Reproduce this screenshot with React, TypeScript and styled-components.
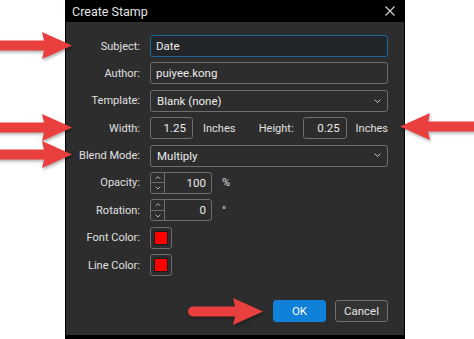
import React from 'react';
import styled, { createGlobalStyle } from 'styled-components';

const GlobalStyle = createGlobalStyle`
  html, body {
    margin: 0;
    padding: 0;
    background: #ffffff;
    font-family: Roboto, "Noto Sans", "Liberation Sans", sans-serif;
  }
`;

const Page = styled.div`
  position: relative;
  width: 474px;
  height: 339px;
  overflow: hidden;
  padding-left: 65px;
  box-sizing: border-box;
`;

const Dialog = styled.div`
  width: 340px;
  height: 339px;
  box-sizing: border-box;
  background: #2d2d2d;
  border: 1px solid #000;
  border-top: none;
  border-bottom: 4px solid #000;
  display: flex;
  flex-direction: column;
`;

const TitleBar = styled.div`
  height: 22px;
  background: #000;
  display: flex;
  align-items: center;
  justify-content: space-between;
  padding: 0 9px 0 6px;
  color: #e4e4e4;
  font-size: 12.5px;
`;

const CloseButton = styled.div`
  width: 10px;
  height: 10px;
  display: flex;
`;

const Body = styled.div`
  flex: 1;
  display: flex;
  flex-direction: column;
  padding: 13px 16px 13px 0;
`;

const Form = styled.div`
  display: grid;
  grid-template-columns: 74px minmax(0, 1fr);
  column-gap: 10px;
  row-gap: 5.4px;
  grid-auto-rows: 22px;
`;

const Label = styled.div`
  color: #e0e0e0;
  font-size: 11px;
  white-space: nowrap;
  display: flex;
  align-items: center;
  justify-content: flex-end;
`;

const Field = styled.div<{ $focused?: boolean; $width?: number; $align?: string }>`
  box-sizing: border-box;
  flex-shrink: 0;
  height: 22px;
  width: ${p => (p.$width ? `${p.$width}px` : '100%')};
  border: 1px solid ${p => (p.$focused ? '#1b6798' : '#6e6e6e')};
  background: ${p => (p.$focused ? '#22262a' : '#2d2d2d')};
  border-radius: 3px;
  color: #ececec;
  font-size: 11.5px;
  display: flex;
  align-items: center;
  justify-content: ${p => p.$align || 'flex-start'};
  padding: 0 6px 0 5px;
`;

const Select = styled(Field)`
  justify-content: space-between;
  padding: 0 6px 0 6px;
`;

const Inline = styled.div`
  display: flex;
  align-items: center;
`;

const Unit = styled.span<{ $gap?: number; $push?: boolean }>`
  color: #e0e0e0;
  font-size: 11px;
  white-space: nowrap;
  margin-left: ${p => (p.$push ? 'auto' : `${p.$gap ?? 10}px`)};
`;

const SpinBox = styled.div`
  box-sizing: border-box;
  width: 62px;
  height: 22px;
  border: 1px solid #6e6e6e;
  border-radius: 3px;
  display: flex;
  overflow: hidden;
`;

const SpinArrows = styled.div`
  width: 13px;
  border-right: 1px solid #6e6e6e;
  display: flex;
  flex-direction: column;
`;

const SpinCell = styled.div<{ $top?: boolean }>`
  flex: 1;
  display: flex;
  align-items: center;
  justify-content: center;
  border-bottom: ${p => (p.$top ? '1px solid #6e6e6e' : 'none')};
`;

const SpinValue = styled.div`
  flex: 1;
  color: #ececec;
  font-size: 11.5px;
  display: flex;
  align-items: center;
  justify-content: flex-end;
  padding-right: 5px;
`;

const Swatch = styled.div`
  box-sizing: border-box;
  width: 22px;
  height: 22px;
  border: 1px solid #6e6e6e;
  border-radius: 3px;
  display: flex;
  align-items: center;
  justify-content: center;
`;

const SwatchFill = styled.div<{ $color: string }>`
  width: 12px;
  height: 12px;
  background: ${p => p.$color};
  outline: 1px solid #1a1a1a;
`;

const Footer = styled.div`
  margin-top: auto;
  display: flex;
  justify-content: flex-end;
  gap: 9px;
`;

const Button = styled.div<{ $primary?: boolean }>`
  box-sizing: border-box;
  width: 53px;
  height: 22px;
  border-radius: 3px;
  font-size: 11.5px;
  display: flex;
  align-items: center;
  justify-content: center;
  color: ${p => (p.$primary ? '#ffffff' : '#e6e6e6')};
  background: ${p => (p.$primary ? '#1080d8' : '#333333')};
  border: 1px solid ${p => (p.$primary ? '#1080d8' : '#707070')};
`;

const ArrowWrap = styled.svg<{ $left: number; $top: number }>`
  position: absolute;
  left: ${p => p.$left}px;
  top: ${p => p.$top}px;
  overflow: visible;
  filter: drop-shadow(1px 2px 1.5px rgba(0, 0, 0, 0.3));
`;

const Chevron = ({ up = false, size = 7 }: { up?: boolean; size?: number }) => (
  <svg width={size} height={size * 0.6} viewBox="0 0 10 6">
    <path
      d={up ? 'M1 5 L5 1 L9 5' : 'M1 1 L5 5 L9 1'}
      fill="none"
      stroke="#cfcfcf"
      strokeWidth="1.4"
    />
  </svg>
);

// tip is (tx, ty); arrow runs `length` px back from the tip
const Arrow = ({ tx, ty, length, left = false }: { tx: number; ty: number; length: number; left?: boolean }) => {
  const h = 27;
  const head = 28;
  const shaft = 10;
  const c = h / 2;
  const d = `M ${shaft / 2} ${c - shaft / 2}
    L ${length - head} ${c - shaft / 2}
    L ${length - head - 2} 0
    L ${length} ${c}
    L ${length - head - 2} ${h}
    L ${length - head} ${c + shaft / 2}
    L ${shaft / 2} ${c + shaft / 2}
    A ${shaft / 2} ${shaft / 2} 0 0 1 ${shaft / 2} ${c - shaft / 2} Z`;
  return (
    <ArrowWrap
      $left={left ? tx : tx - length}
      $top={ty - c}
      width={length}
      height={h}
      viewBox={`0 0 ${length} ${h}`}
    >
      <path d={d} fill="#ea3f3f" transform={left ? `translate(${length} 0) scale(-1 1)` : undefined} />
    </ArrowWrap>
  );
};

const App: React.FC = () => {
  return (
    <>
      <GlobalStyle />
      <Page>
        <Dialog>
          <TitleBar>
            <span>Create Stamp</span>
            <CloseButton>
              <svg width="10" height="10" viewBox="0 0 10 10">
                <path d="M0.5 0.5 L9.5 9.5 M9.5 0.5 L0.5 9.5" stroke="#d8d8d8" strokeWidth="1.1" />
              </svg>
            </CloseButton>
          </TitleBar>
          <Body>
            <Form>
              <Label>Subject:</Label>
              <Field $focused>Date</Field>

              <Label>Author:</Label>
              <Field>puiyee.kong</Field>

              <Label>Template:</Label>
              <Select>
                <span>Blank (none)</span>
                <Chevron />
              </Select>

              <Label>Width:</Label>
              <Inline>
                <Field $width={43} $align="flex-end">1.25</Field>
                <Unit>Inches</Unit>
                <Unit $push>Height:</Unit>
                <Field $width={44} $align="flex-end" style={{ marginLeft: 9 }}>0.25</Field>
                <Unit $gap={9}>Inches</Unit>
              </Inline>

              <Label>Blend Mode:</Label>
              <Select>
                <span>Multiply</span>
                <Chevron />
              </Select>

              <Label>Opacity:</Label>
              <Inline>
                <SpinBox>
                  <SpinArrows>
                    <SpinCell $top><Chevron up size={6} /></SpinCell>
                    <SpinCell><Chevron size={6} /></SpinCell>
                  </SpinArrows>
                  <SpinValue>100</SpinValue>
                </SpinBox>
                <Unit>%</Unit>
              </Inline>

              <Label>Rotation:</Label>
              <Inline>
                <SpinBox>
                  <SpinArrows>
                    <SpinCell $top><Chevron up size={6} /></SpinCell>
                    <SpinCell><Chevron size={6} /></SpinCell>
                  </SpinArrows>
                  <SpinValue>0</SpinValue>
                </SpinBox>
                <Unit>°</Unit>
              </Inline>

              <Label>Font Color:</Label>
              <Inline>
                <Swatch><SwatchFill $color="#ff0000" /></Swatch>
              </Inline>

              <Label>Line Color:</Label>
              <Inline>
                <Swatch><SwatchFill $color="#ff0000" /></Swatch>
              </Inline>
            </Form>
            <Footer>
              <Button $primary>OK</Button>
              <Button>Cancel</Button>
            </Footer>
          </Body>
        </Dialog>
        <Arrow tx={72} ty={45} length={78} />
        <Arrow tx={72} ty={127} length={78} />
        <Arrow tx={72} ty={154} length={78} />
        <Arrow tx={400} ty={126} length={80} left />
        <Arrow tx={263} ty={311} length={75} />
      </Page>
    </>
  );
};

export default App;
